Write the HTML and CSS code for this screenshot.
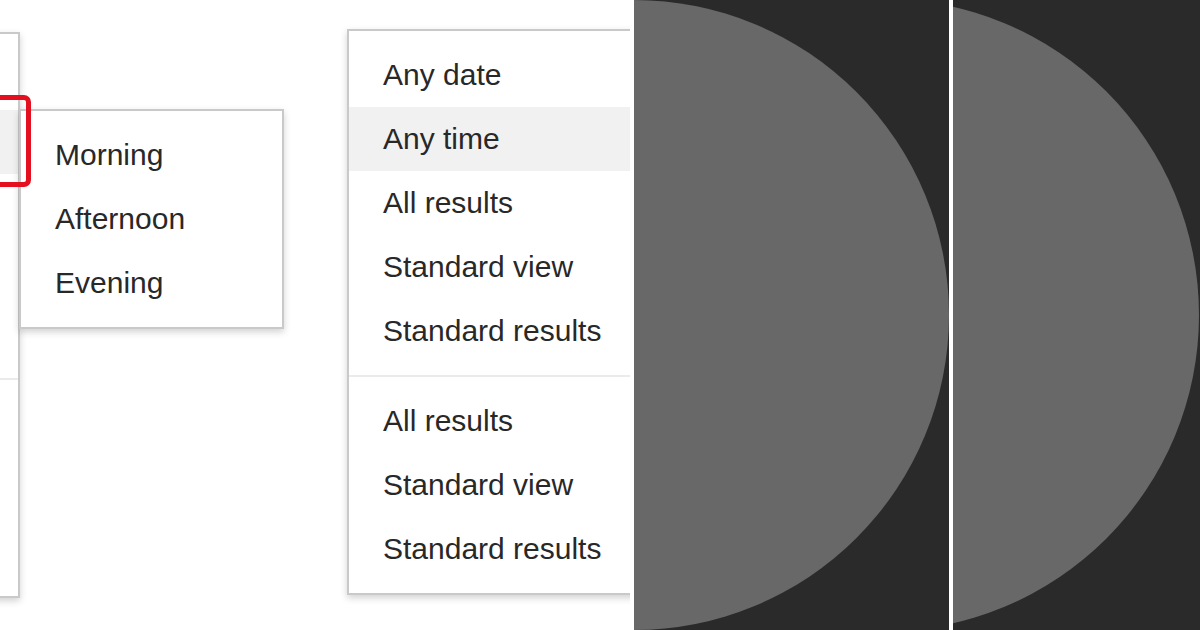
FILE: index.html
```html
<!DOCTYPE html>
<html lang="en">
<head>
<meta charset="utf-8">
<title>Menus</title>
<link rel="stylesheet" href="styles.css">
</head>
<body>
<div class="stage">
  <section class="shot">
    <div class="menu menu-left">
      <div class="group">
        <div class="item">Any date</div>
        <div class="item item-active">Any time</div>
        <div class="item">All results</div>
        <div class="item">Standard view</div>
        <div class="item">Standard results</div>
      </div>
      <div class="group">
        <div class="item">All results</div>
        <div class="item">Standard view</div>
        <div class="item">Standard results</div>
      </div>
    </div>

    <div class="menu menu-sub">
      <div class="group">
        <div class="item">Morning</div>
        <div class="item">Afternoon</div>
        <div class="item">Evening</div>
      </div>
    </div>

    <div class="callout"></div>

    <div class="menu menu-right">
      <div class="group">
        <div class="item">Any date</div>
        <div class="item item-active">Any time</div>
        <div class="item">All results</div>
        <div class="item">Standard view</div>
        <div class="item">Standard results</div>
      </div>
      <div class="group">
        <div class="item">All results</div>
        <div class="item">Standard view</div>
        <div class="item">Standard results</div>
      </div>
    </div>
  </section>

  <section class="panel panel-one"><div class="disc disc-one"></div></section>
  <section class="panel panel-two"><div class="disc disc-two"></div></section>
</div>
</body>
</html>
```

FILE: styles.css
```css
html, body {
  margin: 0;
  padding: 0;
  background: #ffffff;
}

.stage {
  display: flex;
  gap: 4px;
  width: 1200px;
  height: 630px;
  overflow: hidden;
  background: #ffffff;
}

.shot {
  position: relative;
  flex: 0 0 630px;
  height: 630px;
  overflow: hidden;
  background: #ffffff;
  font-family: "Liberation Sans", Arial, sans-serif;
}

.menu {
  position: absolute;
  box-sizing: border-box;
  background: #ffffff;
  border: 2px solid #c9c9c9;
  box-shadow: 0 3px 7px rgba(0, 0, 0, 0.18);
}

.group {
  padding: 12px 0;
}

.group + .group {
  border-top: 2px solid #ebebeb;
}

.item {
  height: 64px;
  line-height: 64px;
  padding: 0 34px;
  font-size: 30px;
  color: #282828;
  white-space: nowrap;
}

.item-active {
  background: #f1f1f1;
}

.menu-left {
  top: 32px;
  left: -300px;
  width: 320px;
}

.menu-right {
  top: 29px;
  left: 347px;
  width: 320px;
}

.menu-sub {
  top: 109px;
  left: 19px;
  width: 265px;
  z-index: 2;
}

.callout {
  position: absolute;
  top: 95px;
  left: -20px;
  width: 51px;
  height: 92px;
  box-sizing: border-box;
  border: 5px solid #e5101f;
  border-radius: 7px;
  z-index: 3;
}

.panel {
  display: flex;
  align-items: center;
  height: 630px;
  overflow: hidden;
  background: #2a2a2a;
}

.panel-one {
  flex: 0 0 315px;
}

.panel-two {
  flex: 0 0 247px;
}

.disc {
  flex: 0 0 auto;
  border-radius: 50%;
  background: #686868;
}

.disc-one {
  width: 630px;
  height: 630px;
  margin-left: -315px;
}

.disc-two {
  width: 632px;
  height: 632px;
  margin-left: -386px;
}
```
